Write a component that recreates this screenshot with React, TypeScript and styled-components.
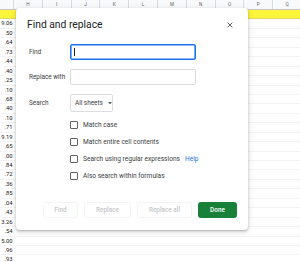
import React from 'react';
import styled, { createGlobalStyle } from 'styled-components';

const GlobalStyle = createGlobalStyle`
  html, body {
    margin: 0;
    padding: 0;
    background: #fff;
  }
  body {
    font-family: Roboto, "Liberation Sans", Arial, sans-serif;
  }
`;

const Page = styled.div`
  position: relative;
  width: 300px;
  height: 262px;
  overflow: hidden;
  background: #fff;
`;

const Sheet = styled.div`
  display: flex;
  flex-direction: column;
`;

const HeaderRow = styled.div`
  display: flex;
  height: 10px;
  box-sizing: border-box;
  background: #f8f9fa;
  border-bottom: 1px solid #c7c7c7;
`;

const HeaderCell = styled.div<{ $w: number }>`
  flex: 0 0 ${(p) => p.$w}px;
  box-sizing: border-box;
  border-right: 1px solid #dadce0;
  font-size: 4.6px;
  line-height: 9px;
  color: #5f6368;
  text-align: center;
`;

const Row = styled.div<{ $highlight?: boolean }>`
  display: flex;
  height: 9.44px;
  box-sizing: border-box;
  background: ${(p) => (p.$highlight ? '#fdf53c' : '#fff')};
  border-bottom: 1px solid ${(p) => (p.$highlight ? '#e2dc5a' : '#f3f3f3')};
`;

const NumCell = styled.div`
  flex: 0 0 14px;
  box-sizing: border-box;
  padding-right: 1.5px;
  font-size: 5.8px;
  line-height: 9px;
  color: #202124;
  text-align: right;
  white-space: nowrap;
  overflow: hidden;
`;

const Dialog = styled.div`
  position: absolute;
  left: 16px;
  top: 8px;
  width: 232px;
  height: 222px;
  box-sizing: border-box;
  padding: 10px 11px 12px;
  background: #fff;
  border-radius: 4px;
  box-shadow: 0 1px 2px rgba(60, 64, 67, 0.3), 0 2px 5px 1px rgba(60, 64, 67, 0.15);
  display: flex;
  flex-direction: column;
`;

const TitleBar = styled.div`
  display: flex;
  align-items: center;
  justify-content: space-between;
  height: 14px;
`;

const Title = styled.div`
  font-size: 10.3px;
  line-height: 14px;
  color: #202124;
`;

const Close = styled.div`
  display: flex;
  margin-right: 4px;
`;

const Field = styled.div<{ $top: number }>`
  display: grid;
  grid-template-columns: 43px 126px;
  align-items: center;
  margin-top: ${(p) => p.$top}px;
`;

const Label = styled.div`
  padding-left: 2px;
  font-size: 6.4px;
  color: #3c4043;
`;

const TextBox = styled.div<{ $focused?: boolean }>`
  height: 16px;
  box-sizing: border-box;
  border-radius: 2px;
  border: 1px solid ${(p) => (p.$focused ? '#1a73e8' : '#dadce0')};
  box-shadow: ${(p) => (p.$focused ? 'inset 0 0 0 0.6px #1a73e8' : 'none')};
  display: flex;
  align-items: center;
  padding-left: 3px;
`;

const Caret = styled.div`
  width: 1px;
  height: 8px;
  background: #202124;
`;

const Select = styled.div`
  justify-self: start;
  width: 43px;
  height: 18px;
  box-sizing: border-box;
  border: 1px solid #dadce0;
  border-radius: 2px;
  display: flex;
  align-items: center;
  padding-left: 4px;
  gap: 5px;
  font-size: 6.4px;
  color: #3c4043;
`;

const CheckList = styled.div`
  display: flex;
  flex-direction: column;
  gap: 5px;
  margin-top: 7px;
  padding-left: 43px;
`;

const CheckRow = styled.div`
  display: flex;
  align-items: center;
  height: 12px;
  gap: 5px;
  font-size: 6.6px;
  color: #3c4043;
`;

const Box = styled.div`
  width: 8px;
  height: 8px;
  box-sizing: border-box;
  border: 1.2px solid #5f6368;
  border-radius: 1px;
`;

const Help = styled.span`
  color: #1a73e8;
  margin-left: 5px;
`;

const Actions = styled.div`
  display: flex;
  justify-content: flex-end;
  gap: 6px;
  margin-top: 20px;
`;

const Button = styled.div<{ $w: number; $primary?: boolean }>`
  width: ${(p) => p.$w}px;
  height: 16px;
  box-sizing: border-box;
  border-radius: 2.5px;
  display: flex;
  align-items: center;
  justify-content: center;
  font-size: 6.4px;
  font-weight: 500;
  background: ${(p) => (p.$primary ? '#188038' : '#fff')};
  color: ${(p) => (p.$primary ? '#fff' : '#c4c7c9')};
  border: 1px solid ${(p) => (p.$primary ? '#188038' : '#f1f3f4')};
`;

const columns = ['H', 'I', 'J', 'K', 'L', 'M', 'N', 'O', 'P', 'Q'];
const values = [
  '', '9.06', '.50', '.64', '.73', '.44', '.40', '.25', '.10', '.68', '.40', '.10', '.71',
  '9.19', '.65', '.00', '.84', '.72', '.36', '.85', '.04', '.43', '3.26', '.54', '5.00',
  '.96', '.93',
];

const checks = [
  'Match case',
  'Match entire cell contents',
  'Search using regular expressions',
  'Also search within formulas',
];

export default function App() {
  return (
    <Page>
      <GlobalStyle />
      <Sheet>
        <HeaderRow>
          <HeaderCell $w={14} />
          {columns.map((c) => (
            <HeaderCell key={c} $w={28.8}>
              {c}
            </HeaderCell>
          ))}
        </HeaderRow>
        {values.map((v, i) => (
          <Row key={i} $highlight={i === 0}>
            <NumCell>{v}</NumCell>
          </Row>
        ))}
      </Sheet>

      <Dialog>
        <TitleBar>
          <Title>Find and replace</Title>
          <Close>
            <svg width="6" height="6" viewBox="0 0 6 6">
              <path d="M0.6 0.6 L5.4 5.4 M5.4 0.6 L0.6 5.4" stroke="#5f6368" strokeWidth="1" />
            </svg>
          </Close>
        </TitleBar>

        <Field $top={12}>
          <Label>Find</Label>
          <TextBox $focused>
            <Caret />
          </TextBox>
        </Field>
        <Field $top={9}>
          <Label>Replace with</Label>
          <TextBox />
        </Field>
        <Field $top={9}>
          <Label>Search</Label>
          <Select>
            All sheets
            <svg width="4" height="2.5" viewBox="0 0 4 2.5">
              <path d="M0 0 L4 0 L2 2.5 Z" fill="#5f6368" />
            </svg>
          </Select>
        </Field>

        <CheckList>
          {checks.map((c, i) => (
            <CheckRow key={c}>
              <Box />
              <span>
                {c}
                {i === 2 && <Help>Help</Help>}
              </span>
            </CheckRow>
          ))}
        </CheckList>

        <Actions>
          <Button $w={35}>Find</Button>
          <Button $w={47}>Replace</Button>
          <Button $w={55}>Replace all</Button>
          <Button $w={39} $primary>
            Done
          </Button>
        </Actions>
      </Dialog>
    </Page>
  );
}
